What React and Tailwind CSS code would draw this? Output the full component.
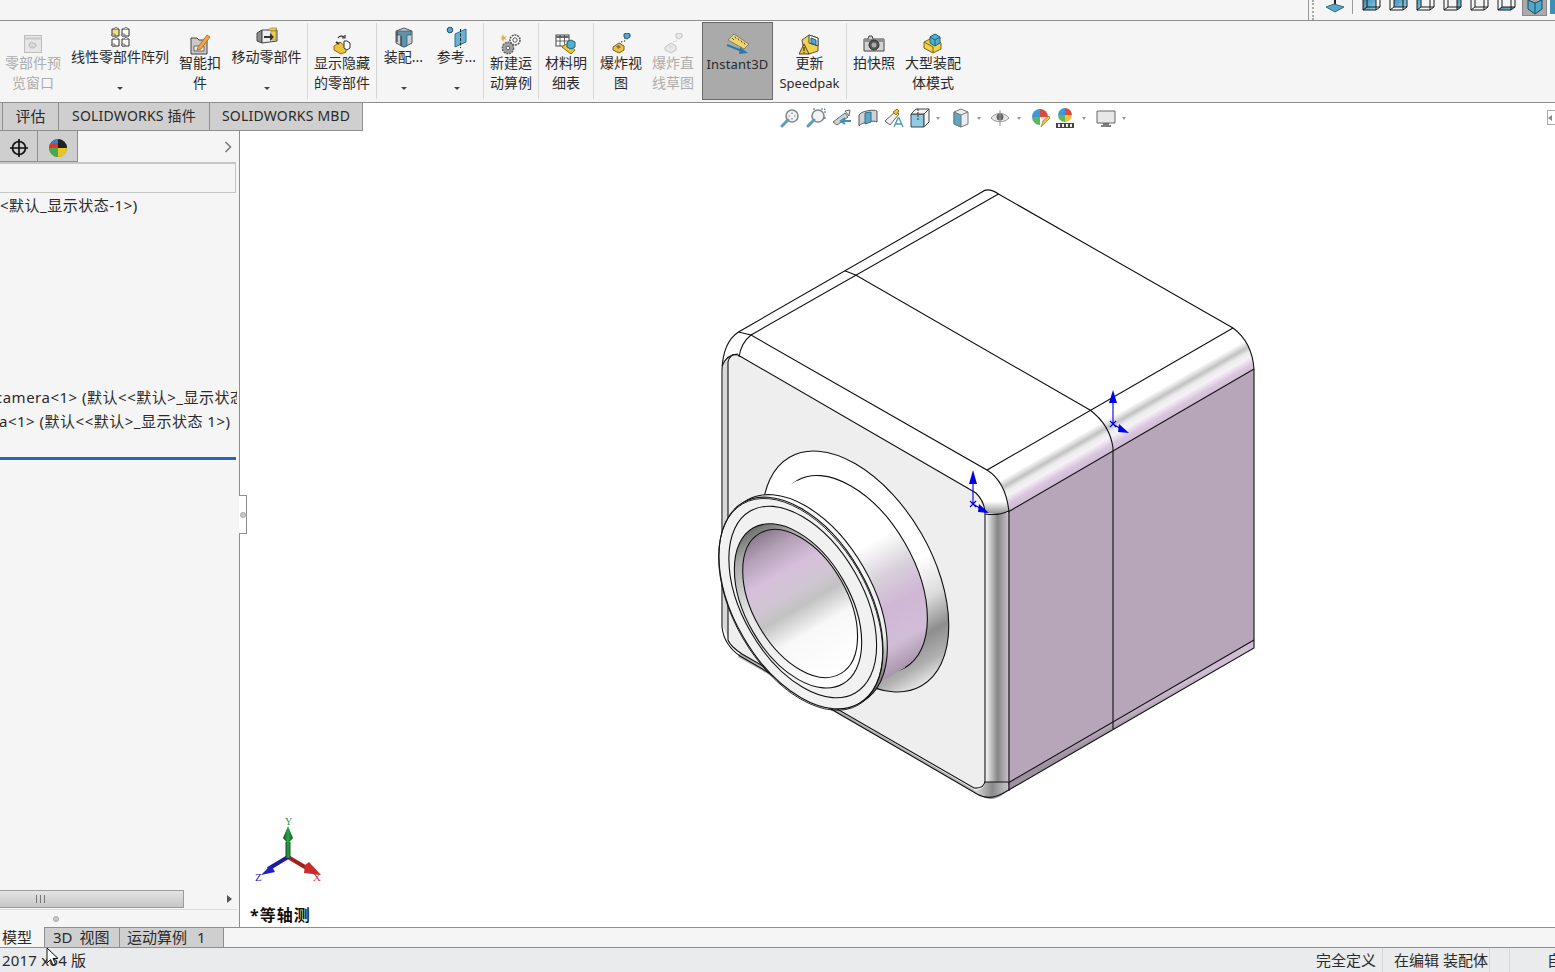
import React from "react";

const Svg = ({ children, w = 22, h = 22, vb = "0 0 22 22" }) => (
  <svg width={w} height={h} viewBox={vb} className="block shrink-0">{children}</svg>
);

const PreviewIcon = () => (
  <Svg><rect x="2.5" y="2.5" width="17" height="17" fill="#e6e6e6" stroke="#bdbdbd" /><path d="M2.5 5.5h17" stroke="#c8c8c8" strokeWidth="2" /><path d="M7 12c1-3 3-3 4-2s3 0 3 2-2 3-3 3-4 0-4-3z" fill="#d8d8d8" stroke="#b5b5b5" /></Svg>
);
const PatternIcon = () => (
  <Svg>
    <path d="M3 3h7v7H3z" fill="#f6e27a" stroke="#333" /><path d="M13 3h7v7h-7z" fill="#fff" stroke="#333" /><path d="M3 13h7v7H3z" fill="#fff" stroke="#333" /><path d="M13 13h7v7h-7z" fill="#fff" stroke="#333" />
    <path d="M5 3l1-1.5h2L9 3M15 3l1-1.5h2L19 3M5 13l1-1.5h2L9 13M15 13l1-1.5h2l1 1.5" fill="#ddd" stroke="#333" strokeWidth=".6" />
    <path d="M3 8h3v2H3zM13 8h3v2h-3zM3 18h3v2H3zM13 18h3v2h-3z" fill="#d8d8d8" stroke="#333" strokeWidth=".5" />
  </Svg>
);
const FastenerIcon = () => (
  <Svg>
    <path d="M2 5h6l2 2h8v14H2z" fill="#c9c9c9" stroke="#444" />
    <path d="M5 13h10v5H5z" fill="#eee" stroke="#666" />
    <path d="M9 14l9-12 3 2-9 12-4 1z" fill="#f2a53a" stroke="#a8641a" strokeWidth=".8" />
  </Svg>
);
const MoveIcon = () => (
  <Svg>
    <path d="M1 7l5-3v13l-5-2z" fill="#8d8d8d" stroke="#444" />
    <path d="M6 4h15v11l-15 2z" fill="#eee" stroke="#444" />
    <path d="M11 4l4-2h6l-2 3z" fill="#f1cf4a" stroke="#8d7a1f" strokeWidth=".6" />
    <path d="M15 5h5v9h-5z" fill="#f1cf4a" stroke="#8d7a1f" strokeWidth=".6" />
    <path d="M8 10h6V7l4 4-4 4v-3H8z" fill="#333" />
  </Svg>
);
const ShowHideIcon = () => (
  <Svg>
    <path d="M7 5a4 4 0 0 1 6-1M14 2v3h-3" fill="none" stroke="#333" strokeWidth="1.2" />
    <path d="M3 13l6-4 6 5v5l-5 2-7-4z" fill="#eec23a" stroke="#8d6f10" />
    <path d="M13 8h3l3 2v5l-3 2-3-2z" fill="#fff" stroke="#333" />
    <path d="M5 9l3 2" stroke="#333" strokeWidth="2" />
  </Svg>
);
const AssemIcon = () => (
  <Svg>
    <path d="M3 5l8-3 8 3v12l-8 4-8-4z" fill="#c8ced3" stroke="#555" />
    <path d="M4 5h14v4h-4v11l-3 1-3-1V9H4z" fill="#5d93ae" stroke="#33586b" strokeWidth=".7" />
    <path d="M8 10v10M4 6v10" stroke="#444" strokeWidth="1.2" />
  </Svg>
);
const RefIcon = () => (
  <Svg>
    <circle cx="4" cy="4" r="2.8" fill="#5ca6cc" stroke="#21536d" />
    <path d="M9 8l11-5v13L9 21z" fill="#65b2d5" stroke="#2f6e8d" />
    <path d="M14.5 3v19" stroke="#222" strokeWidth="1" strokeDasharray="3 1.5" />
  </Svg>
);
const GearIcon = () => (
  <Svg>
    <path d="M3 1l1 3 3-1-2 2 2 2-3-1-1 3-1-3-2 1 2-2-2-2 2 1z" fill="#f2a53a" />
    <circle cx="15" cy="7" r="5" fill="#fff" stroke="#555" strokeWidth="1.6" strokeDasharray="2 .8" /><circle cx="15" cy="7" r="2.2" fill="#fff" stroke="#555" />
    <circle cx="8" cy="15" r="5.6" fill="#a3a3a3" stroke="#666" strokeWidth="1.6" strokeDasharray="2 .8" /><circle cx="8" cy="15" r="1.8" fill="#fff" stroke="#555" />
  </Svg>
);
const BomIcon = () => (
  <Svg>
    <rect x="1" y="2" width="13" height="11" fill="#fff" stroke="#444" /><path d="M1 3h13v2H1z" fill="#6d6d6d" /><path d="M1 8h13M5 2v11M9.500 2v11" stroke="#444" strokeWidth=".8" />
    <path d="M7 14l4-3 9 6-4 4z" fill="#eec23a" stroke="#8d6f10" />
    <path d="M12 9l4-2 4 2v5l-4 2-4-2z" fill="#4fb2cf" stroke="#1f5f78" />
  </Svg>
);
const ExplodeIcon = ({ off }) => (
  <Svg>
    <path d="M3 14l6-4 5 3v4l-5 3-6-3z" fill={off ? "#e8e8e8" : "#eec23a"} stroke={off ? "#c4c4c4" : "#7d6210"} />
    <path d="M6 13l3-1 2 2-3 2z" fill={off ? "#ddd" : "#777"} />
    <path d="M11 9l4-1 0-4" fill="none" stroke={off ? "#ccc" : "#333"} strokeDasharray="1.5 1.5" />
    <path d="M14 1l3-1 3 1v3l-3 2-3-2z" fill={off ? "#e8e8e8" : "#4fa9c9"} stroke={off ? "#c4c4c4" : "#1f5f78"} />
  </Svg>
);
const InstantIcon = () => (
  <Svg w={24} h={24} vb="0 0 24 24">
    <path d="M2 8l6-6 15 10-5 5z" fill="#eed768" stroke="#7d7d7d" />
    <path d="M6 6l2 2M9 4.500l1 2M12 6.500l1 2M15 8.500l1 2M18 10.500l1 2" stroke="#555" />
    <path d="M1 13l15 6" stroke="#2d7aa6" strokeWidth="2" /><path d="M14 15l8 6-9 1z" fill="#2d7aa6" />
  </Svg>
);
const SpeedpakIcon = () => (
  <Svg>
    <path d="M3 7l7-5 9 3v13l-9 3-5-3z" fill="#efd24f" stroke="#555" />
    <path d="M10 2l9 3v8l-9-3z" fill="#fff" stroke="#444" /><path d="M12 5l5 2v5l-5-2z" fill="#4fa9c9" stroke="#1f5f78" />
    <path d="M5 11l5 10H0z" fill="#f0c52c" stroke="#222" strokeWidth=".8" /><path d="M5 14v4M5 19v1" stroke="#111" />
  </Svg>
);
const CameraIcon = () => (
  <Svg>
    <path d="M1 6h4l1-3h3l1 3h11v12H1z" fill="#d4d4d4" stroke="#444" />
    <path d="M1 6h20v3H1z" fill="#8f8f8f" />
    <circle cx="11" cy="12" r="5" fill="#555" stroke="#333" /><circle cx="11" cy="12" r="2.500" fill="#aaa" />
  </Svg>
);
const LargeIcon = () => (
  <Svg>
    <path d="M2 9l8-4 9 5v6l-8 4-9-5z" fill="#efd24f" stroke="#7d6210" />
    <path d="M2 9l9 5v6" fill="none" stroke="#7d6210" />
    <path d="M8 4l5-3 5 3v6l-5 3-5-3z" fill="#4fb2cf" stroke="#1f5f78" /><path d="M8 4l5 3 5-3M13 7v6" fill="none" stroke="#1f5f78" />
  </Svg>
);

const Tall = ({ w, lines, icon, off, latin }) => (
  <div className={`${w} flex flex-col items-center pt-[13px] shrink-0`}>
    <div className="h-[19px] flex items-center justify-center">{icon}</div>
    {lines.map((l) => (
      <div key={l} className={`leading-[20px] whitespace-nowrap ${latin === l ? "text-[13px]" : "text-[14px]"} ${off ? "text-[#adadad]" : "text-[#2a2a2a]"}`}>{l}</div>
    ))}
  </div>
);
const Short = ({ w, label, icon }) => (
  <div className={`${w} flex flex-col items-center pt-[5px] shrink-0`}>
    <div className="h-[21px] flex items-center justify-center">{icon}</div>
    <div className="leading-[20px] text-[14px] whitespace-nowrap text-[#2a2a2a]">{label}</div>
    <div className="mt-[20px] w-0 h-0 border-l-[3px] border-r-[3px] border-t-[3px] border-l-transparent border-r-transparent border-t-[#444]" />
  </div>
);
const Sep = () => <div className="w-px h-[76px] mt-[2px] bg-[#d6d6d6] shrink-0" />;

const ViewCube = ({ d }) => (
  <svg width="20" height="20" viewBox="0 0 20 20" className="block shrink-0">
    <defs><linearGradient id="vc" x1="0" y1="0" x2="1" y2="1"><stop offset="0" stopColor="#2f7ea6" /><stop offset="1" stopColor="#8ed0ea" /></linearGradient></defs>
    {d === 0 && <path d="M2 2h13v14H2z" fill="url(#vc)" />}
    {d === 1 && <path d="M6 0h13v13H6z" fill="url(#vc)" />}
    {d === 2 && <path d="M2 2l4-2v13l-4 3z" fill="url(#vc)" />}
    {d === 3 && <path d="M15 2l4-2v13l-4 3z" fill="url(#vc)" />}
    {d === 5 && <path d="M2 16l4-3h13l-4 3z" fill="url(#vc)" />}
    <path d="M2 2h13v14H2z" fill="none" stroke="#1d1d1d" />
    <path d="M15 2l4-2M15 16l4-3V0M2 16l4-3h13M6 13V0" fill="none" stroke="#1d1d1d" />
  </svg>
);
const Down = () => <div className="w-0 h-0 border-l-[2.5px] border-r-[2.5px] border-t-[3px] border-l-transparent border-r-transparent border-t-[#9a9a9a]" />;

const Mag = ({ inner }) => (
  <svg width="20" height="20" viewBox="0 0 20 20" className="block shrink-0">
    <circle cx="12" cy="8" r="6" fill="#f3f3f3" stroke="#7c8b94" strokeWidth="1.6" />
    <path d="M8 12l-6 6" stroke="#5d9cbf" strokeWidth="3" strokeLinecap="round" />
    {inner}
  </svg>
);

const HudBar = () => (
  <div className="absolute top-[1px] left-[780px] h-[28px] flex items-center">
    <div className="w-[20px] flex justify-center"><Mag inner={<path d="M12 4.500v1.500M12 10v1.500M8.500 8H10M14 8h1.500" stroke="#777" strokeWidth="1.2" />} /></div>
    <div className="w-[6px]" />
    <div className="w-[20px]"><Mag inner={<path d="M15 1h4v4M9 1H6M19 9v3" fill="none" stroke="#555" strokeDasharray="2 1" />} /></div>
    <div className="w-[6px]" />
    <svg width="20" height="20" viewBox="0 0 20 20" className="block shrink-0"><path d="M1 14L13 5l3 4-11 8z" fill="#cfd3d6" stroke="#666" /><path d="M13 3l5-1-1 6z" fill="#eee" stroke="#666" /><path d="M19 13h-9M13 10l-4 3 4 3" stroke="#3d8fbd" strokeWidth="2" fill="none" /></svg>
    <div className="w-[6px]" />
    <svg width="20" height="20" viewBox="0 0 20 20" className="block shrink-0"><path d="M1 7c2-4 15-6 18-4v11c-3-2-15 0-18 4z" fill="#cfd3d6" stroke="#555" /><path d="M7 5v11l6-2V4z" fill="#5ea6c4" stroke="#2f6e8d" /></svg>
    <div className="w-[6px]" />
    <svg width="20" height="20" viewBox="0 0 20 20" className="block shrink-0"><path d="M1 13L12 3l3 3L6 17z" fill="#eee" stroke="#666" /><path d="M9 4l4-3 2 2-3 4z" fill="#eec23a" stroke="#8d6f10" /><path d="M10 19l4-9h1l4 9M12 16h5" fill="none" stroke="#4d94b8" strokeWidth="1.3" /></svg>
    <div className="w-[6px]" />
    <svg width="20" height="20" viewBox="0 0 20 20" className="block shrink-0"><path d="M1 6h13v13H1z" fill="#8fcbe3" stroke="#444" /><path d="M1 6l5-5h13l-5 5zM14 6l5-5v13l-5 5z" fill="#f2f2f2" stroke="#444" /><path d="M8 1v11" stroke="#333" strokeDasharray="2 1" /></svg>
    <div className="w-[6px] ml-[6px]"><Down /></div>
    <svg width="20" height="20" viewBox="0 0 20 20" className="block shrink-0 ml-[9px]"><path d="M3 4l7-3 7 3v12l-7 3-7-3z" fill="#e9edf0" stroke="#777" /><path d="M3 4l7 3v12l-7-3z" fill="#5ea6c4" stroke="#777" /><path d="M10 7l7-3" stroke="#777" /></svg>
    <div className="w-[6px] ml-[6px]"><Down /></div>
    <svg width="20" height="20" viewBox="0 0 20 20" className="block shrink-0 ml-[7px]"><path d="M1 10c4-6 14-6 18 0-4 5-14 5-18 0z" fill="#e6e6e6" stroke="#999" /><circle cx="10" cy="9" r="3.500" fill="#666" /><path d="M10 2v16" stroke="#999" /></svg>
    <div className="w-[6px] ml-[7px]"><Down /></div>
    <svg width="22" height="22" viewBox="0 0 22 22" className="block shrink-0 ml-[6px]"><path d="M11 2a8 8 0 0 1 8 8h-8z" fill="#d94b3d" /><path d="M11 2a8 8 0 0 0-8 8h8z" fill="#3d9ad9" /><path d="M3 10a8 8 0 0 0 8 8v-8z" fill="#5cb85c" /><path d="M11 10h8a8 8 0 0 1-4 7z" fill="#ddd" /><path d="M12 20l2-6 6-5 1 2-6 6z" fill="#eec23a" stroke="#8d6f10" strokeWidth=".6" /></svg>
    <svg width="22" height="22" viewBox="0 0 22 22" className="block shrink-0 ml-[3px]"><path d="M11 1a7 7 0 0 1 7 7h-7z" fill="#d94b3d" /><path d="M11 1a7 7 0 0 0-7 7h7z" fill="#3d9ad9" /><path d="M4 8a7 7 0 0 0 7 7V8z" fill="#5cb85c" /><path d="M11 8h7a7 7 0 0 1-7 7z" fill="#eec23a" /><path d="M2 16h18v5H2z" fill="#444" /><path d="M4 17h2v3H4zM8 17h2v3H8zM12 17h2v3h-2zM16 17h2v3h-2z" fill="#eee" /></svg>
    <div className="w-[6px] ml-[6px]"><Down /></div>
    <svg width="20" height="20" viewBox="0 0 20 20" className="block shrink-0 ml-[8px]"><path d="M1 3h18v12H1z" fill="#e8e8e8" stroke="#666" /><path d="M7 16h6M5 18h10" stroke="#555" strokeWidth="1.4" /></svg>
    <div className="w-[6px] ml-[6px]"><Down /></div>
  </div>
);

const Model = () => (
  <svg viewBox="240 131 1315 796" className="block w-full h-full" fill="none">
    <defs>
      <linearGradient id="topFillet" gradientUnits="userSpaceOnUse" x1="1000" y1="461" x2="1024" y2="503">
        <stop offset="0" stopColor="#fff" /><stop offset=".35" stopColor="#fff" /><stop offset=".5" stopColor="#c2c2c2" /><stop offset=".6" stopColor="#ececec" /><stop offset=".7" stopColor="#f6f1f7" /><stop offset=".85" stopColor="#d9c6dd" /><stop offset="1" stopColor="#cfb8d4" />
      </linearGradient>
      <linearGradient id="rightFillet" x1="0" y1="0" x2="1" y2="0">
        <stop offset="0" stopColor="#fff" /><stop offset=".15" stopColor="#dcdcdc" /><stop offset=".55" stopColor="#868686" /><stop offset="1" stopColor="#c4c0c6" />
      </linearGradient>
      <linearGradient id="corner" x1="0" y1="0" x2="0" y2="1">
        <stop offset="0" stopColor="#fff" /><stop offset=".7" stopColor="#fff" /><stop offset="1" stopColor="#8d8d8d" />
      </linearGradient>
      <linearGradient id="bottomCorner" x1="0" y1="0" x2="1" y2="0">
        <stop offset="0" stopColor="#e8e8e8" /><stop offset=".55" stopColor="#8a8a8a" /><stop offset="1" stopColor="#c8c4ca" />
      </linearGradient>
      <linearGradient id="bottomStrip" gradientUnits="userSpaceOnUse" x1="1100" y1="725" x2="1105" y2="735">
        <stop offset="0" stopColor="#cfbdd3" /><stop offset="1" stopColor="#9d909f" />
      </linearGradient>
      <linearGradient id="flange" x1="0" y1="0" x2="0" y2="1">
        <stop offset="0" stopColor="#fff" /><stop offset=".58" stopColor="#fff" /><stop offset=".72" stopColor="#dcdcdc" /><stop offset=".84" stopColor="#8e8e8e" /><stop offset=".93" stopColor="#b0b0b0" /><stop offset="1" stopColor="#e6e6e6" />
      </linearGradient>
      <linearGradient id="cyl" gradientUnits="userSpaceOnUse" x1="0" y1="-108" x2="0" y2="108">
        <stop offset="0" stopColor="#fff" /><stop offset=".42" stopColor="#fff" /><stop offset=".58" stopColor="#d8d0da" /><stop offset=".72" stopColor="#cfb7d5" /><stop offset=".88" stopColor="#d2bdd7" /><stop offset="1" stopColor="#a897ab" />
      </linearGradient>
      <linearGradient id="rim" x1="0" y1="0" x2="0" y2="1">
        <stop offset="0" stopColor="#fff" /><stop offset=".8" stopColor="#eee" /><stop offset=".93" stopColor="#8a8a8a" /><stop offset="1" stopColor="#777" />
      </linearGradient>
      <linearGradient id="chamfer" x1="0" y1="0" x2="0" y2="1">
        <stop offset="0" stopColor="#6f6f6f" /><stop offset=".12" stopColor="#a8a8a8" /><stop offset=".4" stopColor="#e6e6e6" /><stop offset="1" stopColor="#fff" />
      </linearGradient>
      <linearGradient id="hole" x1="0" y1="0" x2="0" y2="1">
        <stop offset="0" stopColor="#8a7a8d" /><stop offset=".12" stopColor="#b39fb6" /><stop offset=".28" stopColor="#d6bfdb" /><stop offset=".42" stopColor="#d0c6d2" /><stop offset=".52" stopColor="#c2c2c2" /><stop offset=".68" stopColor="#f8f8f8" /><stop offset="1" stopColor="#fff" />
      </linearGradient>
      <linearGradient id="gy" x1="0" y1="0" x2="1" y2="0"><stop offset="0" stopColor="#0d4a1a" /><stop offset=".5" stopColor="#2fa34a" /><stop offset="1" stopColor="#0d5a20" /></linearGradient>
    </defs>

    <path d="M1008 512L1254 369V640L1008 783Z" fill="#b7a6ba" />
    <path d="M1008 783L1254 640V648L1007 791Z" fill="url(#bottomStrip)" />
    <path d="M987 470L1233 328Q1252 340 1254 369L1010 511Q998 514 985 514Q1004 490 987 470Z" fill="url(#topFillet)" />
    <path d="M987 470Q1006 482 1010 511Q998 516 985 514Q985 500 975 490Z" fill="url(#corner)" />
    <rect x="985" y="513" width="23" height="269" fill="url(#rightFillet)" />
    <path d="M985 782H1008V790Q1000 799 990 799Q980 798 973 790Q985 790 985 782Z" fill="url(#bottomCorner)" />
    <path d="M723 360H729V640L723 627Z" fill="#d8d8d8" />
    <path d="M740 653L973 789L978 794L738 657Z" fill="#b4b4b4" />
    <path d="M728 362Q730 353 738 355L976 493Q985 502 985 514V781Q984 789 974 788L742 654Q730 646 728 640Z" fill="#eee" stroke="#111" strokeWidth="1.1" />

    <g stroke="#111" strokeWidth="1.1">
      <path d="M722 370V627Q724 645 740 656L977 794Q990 802 1007 791L1254 648V369Q1252 342 1233 328L998.500 194Q988 187 982 192L738.500 332Q723 342 722 370" />
      <path d="M998.500 194L751 335Q741 343 739 357" />
      <path d="M738.500 332L751 335L987 470L1233 328" />
      <path d="M844.700 270.700L855.700 275L1090 410Q1110 425 1113 448V729" />
      <path d="M1008 512L1254 369M987 470Q1006 482 1009 512V791M985 782H1008M1008 783L1254 640" />
      <path d="M1009 511Q998 516 985 514" />
      <path d="M722 366Q727 354 738 354" />
    </g>

    <g transform="translate(801 603) rotate(-30)" stroke="#111" strokeWidth="1.1">
      <ellipse cx="63" cy="0" rx="76" ry="132" fill="url(#flange)" />
      <ellipse cx="58" cy="0" rx="62" ry="108" fill="url(#cyl)" />
      <path d="M0 -108H58V108H0Z" fill="url(#cyl)" stroke="none" />
      <ellipse cx="5" cy="0" rx="67" ry="116" fill="url(#rim)" />
      <ellipse cx="0" cy="0" rx="67" ry="116" fill="#f1f1f1" />
      <ellipse cx="-1" cy="1" rx="67" ry="116" fill="none" strokeWidth=".8" />
      <ellipse cx="2" cy="0" rx="60" ry="105" fill="#f1f1f1" />
      <ellipse cx="-4" cy="1" rx="52" ry="90" fill="url(#chamfer)" />
      <ellipse cx="-1" cy="0" rx="47" ry="81" fill="url(#hole)" />
    </g>

    <g stroke="#0000e6" fill="#0000e6" strokeWidth="1.1">
      <path d="M973 504V478M973 504L983 510M970 501L976 507M976 501L970 507" fill="none" />
      <path d="M973 470L977 484H969Z" stroke="none" />
      <path d="M979 504L989 513L978 512Z" stroke="none" />
      <path d="M1113 424V398M1113 424L1121 429M1110 421L1116 427M1116 421L1110 427" fill="none" />
      <path d="M1113 390L1117 403H1109Z" stroke="none" />
      <path d="M1119 424L1129 433L1118 432Z" stroke="none" />
    </g>

    <path d="M288 857L310 870" stroke="#a32020" strokeWidth="4" />
    <path d="M305 865L309 862L321 875L304 873Z" fill="#c92c2c" />
    <path d="M288 857L268 869" stroke="#1c1c9c" strokeWidth="4" />
    <path d="M271 865L275 872L261 875Z" fill="#2020c8" />
    <path d="M285.500 858H290.500V842H285.500Z" fill="url(#gy)" />
    <path d="M288 826L293 838L288 844L283 838Z" fill="url(#gy)" />
    <text x="285" y="825" fontSize="10" fill="#2a8f3f" fontFamily="Liberation Serif">Y</text>
    <text x="255" y="881" fontSize="11" fill="#2020c8" fontFamily="Liberation Serif">Z</text>
    <text x="313" y="881" fontSize="11" fill="#d43030" fontFamily="Liberation Serif">X</text>
  </svg>
);

export default function App() {
  return (
    <div className="w-[1555px] h-[972px] overflow-hidden flex flex-col bg-white text-[#2a2a2a] font-['Noto_Sans','Noto_Sans_CJK_SC',sans-serif]">
      <div className="h-[21px] shrink-0 bg-[#f5f5f5] border-b border-[#8e8e8e] flex justify-end items-end overflow-hidden">
        <div className="w-px h-[20px] bg-[#999]" />
        <div className="w-[3px] h-[20px] ml-[3px] border-l-2 border-dotted border-[#aaa]" />
        <div className="ml-[10px] mb-[6px]">
          <svg width="20" height="18" viewBox="0 0 20 18" className="block"><path d="M10 0v11" stroke="#222" strokeWidth="2" /><path d="M1 11l8-3 10 3-9 5z" fill="#5ea6c4" stroke="#2f6e8d" /></svg>
        </div>
        <div className="w-px h-[14px] mb-[6px] ml-[7px] bg-[#999]" />
        <div className="flex items-end gap-[7px] ml-[8px] mb-[6px]">
          <ViewCube d={0} /><ViewCube d={1} /><ViewCube d={2} /><ViewCube d={3} /><ViewCube d={4} /><ViewCube d={5} />
        </div>
        <div className="ml-[6px] mb-[4px] w-[25px] h-[16px] bg-[#aaa] border border-[#888] border-t-0 flex justify-center items-end overflow-hidden">
          <svg width="16" height="18" viewBox="0 0 16 18" className="block"><path d="M1 3l7 3 7-3v9l-7 5-7-5z" fill="#4fa9c9" stroke="#1a4a60" /><path d="M8 6v10" stroke="#1a4a60" /></svg>
        </div>
        <div className="ml-[3px] w-[5px] h-[14px] mb-[6px] bg-[#3f8fb5]" />
      </div>

      <div className="h-[82px] shrink-0 bg-[#f5f5f5] border-b border-[#8e8e8e] flex">
        <Tall w="w-[66px]" lines={["零部件预", "览窗口"]} icon={<PreviewIcon />} off />
        <Short w="w-[108px]" label="线性零部件阵列" icon={<PatternIcon />} />
        <Tall w="w-[52px]" lines={["智能扣", "件"]} icon={<FastenerIcon />} />
        <Short w="w-[81px]" label="移动零部件" icon={<MoveIcon />} />
        <Sep />
        <Tall w="w-[68px]" lines={["显示隐藏", "的零部件"]} icon={<ShowHideIcon />} />
        <Sep />
        <Short w="w-[53px]" label="装配..." icon={<AssemIcon />} />
        <Short w="w-[53px]" label="参考..." icon={<RefIcon />} />
        <Sep />
        <Tall w="w-[54px]" lines={["新建运", "动算例"]} icon={<GearIcon />} />
        <Sep />
        <Tall w="w-[54px]" lines={["材料明", "细表"]} icon={<BomIcon />} />
        <Sep />
        <Tall w="w-[54px]" lines={["爆炸视", "图"]} icon={<ExplodeIcon />} />
        <Tall w="w-[50px]" lines={["爆炸直", "线草图"]} icon={<ExplodeIcon off />} off />
        <div className="w-[71px] h-[78px] ml-[4px] mt-[1px] bg-[#aaaaaa] border border-[#6a6a6a] flex flex-col items-center pt-[11px] shrink-0">
          <div className="h-[20px] flex items-center"><InstantIcon /></div>
          <div className="leading-[20px] text-[13px] tracking-[.2px]">Instant3D</div>
        </div>
        <Tall w="w-[73px]" lines={["更新", "Speedpak"]} latin="Speedpak" icon={<SpeedpakIcon />} />
        <Sep />
        <Tall w="w-[54px]" lines={["拍快照"]} icon={<CameraIcon />} />
        <Tall w="w-[64px]" lines={["大型装配", "体模式"]} icon={<LargeIcon />} />
      </div>

      <div className="h-[28px] shrink-0 relative flex bg-white">
        <div className="h-full flex bg-[#cfcfcf] border-b border-[#8e8e8e] text-[15px] leading-[26px]">
          <div className="w-[3px] border-r border-[#8e8e8e]" />
          <div className="w-[56px] text-center border-r border-[#8e8e8e]">评估</div>
          <div className="w-[151px] text-center border-r border-[#8e8e8e] text-[14px] tracking-[.2px]">SOLIDWORKS 插件</div>
          <div className="w-[153px] text-center border-r border-[#8e8e8e] text-[14px] tracking-[.2px]">SOLIDWORKS MBD</div>
        </div>
        <HudBar />
        <div className="absolute top-[7px] right-0 w-[8px] h-[15px] border border-[#aaa] border-r-0 flex items-center">
          <div className="w-0 h-0 border-y-[3px] border-r-[4px] border-y-transparent border-r-[#888]" />
        </div>
      </div>

      <div className="h-[796px] shrink-0 flex">
        <div className="w-[240px] shrink-0 relative bg-[#f5f5f5] border-r border-[#8e8e8e] flex flex-col">
          <div className="h-[31px] flex shrink-0">
            <div className="w-[38px] bg-[#cfcfcf] border-r border-b border-[#8e8e8e] flex items-center justify-center pt-[3px]">
              <svg width="20" height="20" viewBox="0 0 20 20" className="block"><circle cx="10" cy="10" r="6.500" fill="none" stroke="#111" strokeWidth="1.700" /><path d="M10 1v18M1 10h18" stroke="#111" strokeWidth="1.700" /></svg>
            </div>
            <div className="w-[40px] bg-[#cfcfcf] border-r border-b border-[#8e8e8e] flex items-center justify-center pt-[3px]">
              <svg width="20" height="20" viewBox="0 0 20 20" className="block"><circle cx="10" cy="10" r="9" fill="#3c8a3c" /><path d="M10 1a9 9 0 0 1 9 9l-9 0z" fill="#222" /><path d="M10 1a9 9 0 0 0-9 9l9 0z" fill="#d43a30" /><path d="M1 10a9 9 0 0 0 9 9v-9z" fill="#4aa84a" /><path d="M10 10h9a9 9 0 0 1-9 9z" fill="#e8c81e" /><path d="M3 6a8 8 0 0 1 7-5l0 4z" fill="#3b7fd0" /></svg>
            </div>
            <div className="flex-1 flex items-center justify-end pr-[7px] pb-[1px] pt-[2px]">
              <svg width="8" height="12" viewBox="0 0 8 12" className="block"><path d="M1.500 1L6.500 6L1.500 11" fill="none" stroke="#777" strokeWidth="1.500" /></svg>
            </div>
          </div>
          <div className="h-[31px] shrink-0 mr-[3px] border-t-2 border-b border-r border-[#c6c6c6]" />
          <div className="h-[24px] leading-[24px] text-[15px] tracking-[.5px] whitespace-nowrap">&lt;默认_显示状态-1&gt;)</div>
          <div className="mt-[168px] h-[24px] leading-[24px] text-[15px] tracking-[.5px] whitespace-nowrap overflow-hidden mr-[2px]"><span className="inline-block -ml-[5px]">camera&lt;1&gt; (默认&lt;&lt;默认&gt;_显示状态 1&gt;)</span></div>
          <div className="h-[24px] leading-[24px] text-[15px] tracking-[.5px] whitespace-nowrap overflow-hidden"><span className="inline-block -ml-[1px]">a&lt;1&gt; (默认&lt;&lt;默认&gt;_显示状态 1&gt;)</span></div>
          <div className="mt-[24px] h-[3px] mr-[3px] bg-[#2a63b8] shrink-0" />
          <div className="flex-1" />
          <div className="h-[20px] shrink-0 flex items-center">
            <div className="w-[184px] h-[18px] bg-gradient-to-b from-[#e4e4e4] to-[#c6c6c6] border border-[#9c9c9c] border-l-0 flex items-center justify-center pr-[102px]">
              <div className="w-[9px] h-[8px] border-x border-[#777] flex justify-center"><div className="w-px bg-[#777]" /></div>
            </div>
            <div className="flex-1 flex justify-end pr-[7px]">
              <div className="w-0 h-0 border-y-[4px] border-l-[5px] border-y-transparent border-l-[#555]" />
            </div>
          </div>
          <div className="h-[18px] shrink-0 border-t border-[#dcdcdc] flex items-center justify-center pr-[126px] mr-[2px]">
            <div className="w-[6px] h-[6px] rounded-full bg-[#c8c8c8] border border-[#aaa]" />
          </div>
          <div className="absolute left-[239px] top-[364px] w-[8px] h-[39px] bg-white border border-l-0 border-[#8e8e8e] flex items-center justify-center">
            <div className="w-[6px] h-[6px] rounded-full bg-[#c8c8c8] border border-[#aaa]" />
          </div>
        </div>

        <div className="flex-1 relative min-w-0">
          <Model />
          <div className="absolute left-[10px] bottom-[1px] text-[16px] leading-[22px] font-bold tracking-[1px] text-[#111] whitespace-nowrap">*等轴测</div>
        </div>
      </div>

      <div className="h-[21px] shrink-0 bg-[#f5f5f5] border-y border-[#8e8e8e] flex text-[15px] leading-[19px] relative">
        <div className="w-[45px] pl-[2px] border-r border-[#8e8e8e] -mt-px bg-[#f5f5f5] leading-[21px]">模型</div>
        <div className="w-[75px] pl-[8px] bg-[#cfcfcf] border-r border-[#8e8e8e] [word-spacing:3px]">3D 视图</div>
        <div className="w-[104px] pl-[7px] bg-[#cfcfcf] border-r border-[#8e8e8e] [word-spacing:6px]">运动算例 1</div>
      </div>

      <div className="h-[24px] shrink-0 relative bg-[#e9ebed] flex items-center text-[15px] leading-[24px] whitespace-nowrap">
        <div className="pl-[2px] w-[1316px] tracking-[.2px]">2017 x64 版</div>
        <div className="w-[67px] border-r border-[#d6d8da]">完全定义</div>
        <div className="w-[107px] pl-[11px] border-r border-[#d6d8da]">在编辑 装配体</div>
        <div className="w-[20px] border-r border-[#d6d8da] h-[24px]" />
        <div className="flex-1 overflow-hidden pl-[37px]">自</div>
        <svg width="14" height="20" viewBox="0 0 14 20" className="absolute left-[46px] -top-[1px]"><path d="M1 1V16L4.500 12.500L7 18L9.500 17L7 11.500H12Z" fill="#fff" stroke="#111" strokeWidth="1" /></svg>
      </div>
    </div>
  );
}
